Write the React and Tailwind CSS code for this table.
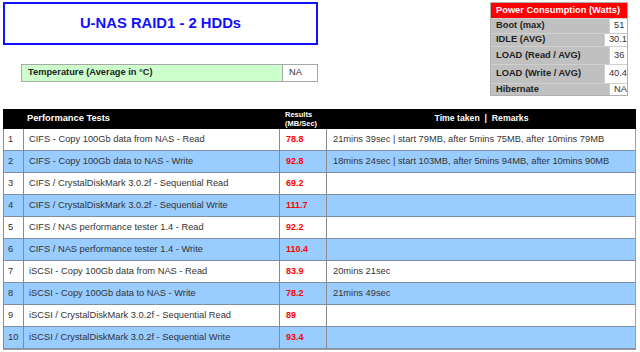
import React from "react";

const power = [
  { label: "Boot (max)", value: "51", h: "h-[15px]" },
  { label: "IDLE (AVG)", value: "30.1", h: "h-[13px]" },
  { label: "LOAD (Read / AVG)", value: "36", h: "h-[18px]" },
  { label: "LOAD (Write / AVG)", value: "40.4", h: "h-[19px]" },
  { label: "Hibernate", value: "NA", h: "h-[12px]" },
];

const rows = [
  ["1", "CIFS - Copy 100Gb data from NAS - Read", "78.8", "21mins 39sec | start 79MB, after 5mins 75MB, after 10mins 79MB"],
  ["2", "CIFS - Copy 100Gb data to NAS - Write", "92.8", "18mins 24sec | start 103MB, after 5mins 94MB, after 10mins 90MB"],
  ["3", "CIFS / CrystalDiskMark 3.0.2f - Sequential Read", "69.2", ""],
  ["4", "CIFS / CrystalDiskMark 3.0.2f - Sequential Write", "111.7", ""],
  ["5", "CIFS / NAS performance tester 1.4 - Read", "92.2", ""],
  ["6", "CIFS / NAS performance tester 1.4 - Write", "110.4", ""],
  ["7", "iSCSI - Copy 100Gb data from NAS - Read", "83.9", "20mins 21sec"],
  ["8", "iSCSI - Copy 100Gb data to NAS - Write", "78.2", "21mins 49sec"],
  ["9", "iSCSI / CrystalDiskMark 3.0.2f - Sequential Read", "89", ""],
  ["10", "iSCSI / CrystalDiskMark 3.0.2f - Sequential Write", "93.4", ""],
];

export default function App() {
  return (
    <div className="w-[640px] h-[352px] bg-white overflow-hidden font-['Liberation_Sans',Arial,sans-serif] text-[#333]">
      <div className="flex pt-[2px] pl-[3px]">
        <div className="w-[315px] flex flex-col">
          <div className="h-[43px] border-2 border-[#1010ff] flex items-center justify-center text-[#1010ff] font-bold text-[14.8px]">
            U-NAS RAID1 - 2 HDDs
          </div>
          <div className="mt-[19px] ml-[18px] h-[18px] flex border border-[#a8a8a8] text-[9.3px]">
            <div className="flex-1 bg-[#ccffcc] flex items-center pl-[6px] font-bold text-[#222]">
              Temperature (Average in °C)
            </div>
            <div className="w-[35px] border-l border-[#a8a8a8] bg-white flex items-center pl-[6px]">NA</div>
          </div>
        </div>
        <div className="ml-[172px] w-[138px] flex flex-col border border-[#b0b0b0] text-[9.3px]">
          <div className="h-[15px] bg-[#ff0000] text-white font-bold flex items-center pl-[5px] whitespace-nowrap">
            Power Consumption (Watts)
          </div>
          {power.map((p) => (
            <div key={p.label} className={`${p.h} flex border-t border-[#d0d0d0]`}>
              <div className="w-[118px] bg-[#c0c0c0] font-bold text-[#222] flex items-center pl-[5px] whitespace-nowrap">
                {p.label}
              </div>
              <div className="flex-1 bg-white border-l border-[#d0d0d0] flex items-center pl-[4px] whitespace-nowrap">
                {p.value}
              </div>
            </div>
          ))}
        </div>
      </div>

      <div className="mt-[13px] ml-[3px] w-[633px] flex flex-col border-b border-[#a0a0a0]">
        <div className="h-[20px] bg-black text-white font-bold flex">
          <div className="w-[21px]"></div>
          <div className="w-[256px] flex items-center pl-[3px] text-[9.3px]">Performance Tests</div>
          <div className="w-[47px] flex flex-col justify-center pl-[5px] text-[7.5px] leading-[9px]">
            <span>Results</span>
            <span>(MB/Sec)</span>
          </div>
          <div className="flex-1 flex items-center justify-center text-[8.7px] whitespace-pre">Time taken  |  Remarks</div>
        </div>
        {rows.map((r, i) => (
          <div
            key={r[0]}
            className={`h-[22px] flex text-[9.3px] border-b border-[#7f8fa0] ${i % 2 === 1 ? "bg-[#99ccff]" : "bg-white"}`}
          >
            <div className="w-[21px] border-l border-r border-[#8a8a8a] flex items-center pl-[4px]">{r[0]}</div>
            <div className="w-[256px] border-r border-[#8a8a8a] flex items-center pl-[5px] whitespace-nowrap">{r[1]}</div>
            <div className="w-[47px] border-r border-[#8a8a8a] flex items-center pl-[6px] text-[#ff0000] font-bold text-[9px]">
              {r[2]}
            </div>
            <div className="flex-1 border-r border-[#a0a0a0] flex items-center pl-[6px] whitespace-nowrap">{r[3]}</div>
          </div>
        ))}
      </div>
    </div>
  );
}
